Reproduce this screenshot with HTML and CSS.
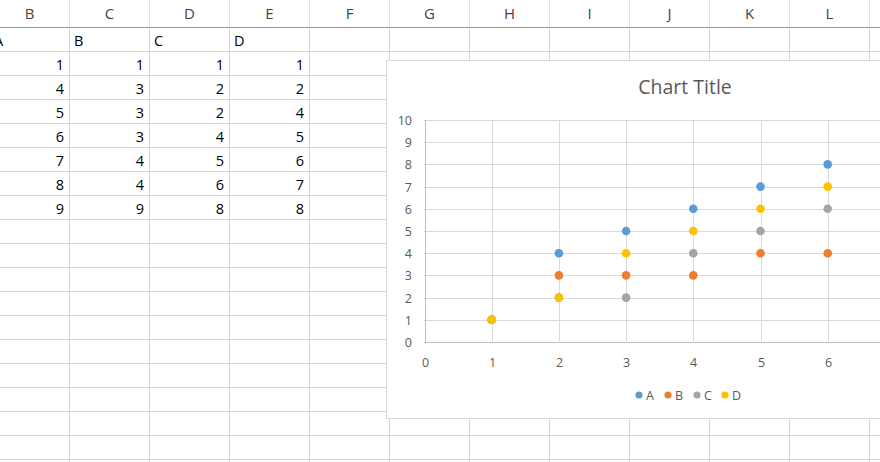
FILE: index.html
```html
<!DOCTYPE html>
<html lang="en">
<head>
<title>Scatter chart sheet</title>
<meta charset="utf-8">
<meta name="viewport" content="width=device-width, initial-scale=1">
<link rel="stylesheet" href="styles.css">
</head>
<body>

<div class="sheet" id="sheet"></div>

<div class="chart">
  <svg class="plot" id="plot" width="493" height="357" viewBox="387 61 493 357">
    <text class="chart-title" x="685" y="94">Chart Title</text>
    <g id="grid"></g>
    <g id="points"></g>
    <g class="legend">
      <circle cx="639" cy="395" r="3.6" fill="#5B9BD5"></circle>
      <text x="646" y="399.5">A</text>
      <circle cx="668" cy="395" r="3.6" fill="#ED7D31"></circle>
      <text x="675" y="399.5">B</text>
      <circle cx="697" cy="395" r="3.6" fill="#A5A5A5"></circle>
      <text x="704" y="399.5">C</text>
      <circle cx="725" cy="395" r="3.6" fill="#FFC000"></circle>
      <text x="732" y="399.5">D</text>
    </g>
  </svg>
</div>

<script>
    // visible columns B..L, plus the edge of M
    var letters = ["B", "C", "D", "E", "F", "G", "H", "I", "J", "K", "L", ""];
    var series = [
      { name: "A", color: "#5B9BD5", values: [1, 4, 5, 6, 7, 8, 9] },
      { name: "B", color: "#ED7D31", values: [1, 3, 3, 3, 4, 4, 9] },
      { name: "C", color: "#A5A5A5", values: [1, 2, 2, 4, 5, 6, 8] },
      { name: "D", color: "#FFC000", values: [1, 2, 4, 5, 6, 7, 8] }
    ];

    // build the spreadsheet grid
    var sheet = document.getElementById("sheet");
    var html = "";
    letters.forEach(function(l) {
      html += '<div class="cell head">' + l + '</div>';
    });
    for (var r = 0; r < 19; r++) {
      for (var c = 0; c < letters.length; c++) {
        var text = "";
        var cls = "cell";
        if (r === 0 && c < 4) {
          text = series[c].name;
          cls += " label";
        } else if (r > 0 && r < 8 && c < 4) {
          text = series[c].values[r - 1];
          cls += " num";
        }
        html += '<div class="' + cls + '">' + text + '</div>';
      }
    }
    sheet.innerHTML = html;

    // chart
    var ns = "http://www.w3.org/2000/svg";
    function px(x) { return 424.5 + x * 67.2; }
    function py(y) { return 342 - y * 22.2; }
    function el(name, attrs, parent, text) {
      var e = document.createElementNS(ns, name);
      for (var k in attrs) e.setAttribute(k, attrs[k]);
      if (text !== undefined) e.textContent = text;
      parent.appendChild(e);
      return e;
    }

    var grid = document.getElementById("grid");
    for (var y = 0; y <= 10; y++) {
      var gy = Math.round(py(y)) + 0.5;
      el("line", { x1: 424, x2: 920, y1: gy, y2: gy, "class": y === 0 ? "axis" : "gridline" }, grid);
      el("text", { x: 412, y: gy + 4.5, "class": "ylabel" }, grid, y);
    }
    for (var x = 0; x <= 6; x++) {
      var gx = Math.round(px(x)) + 0.5;
      el("line", { x1: gx, x2: gx, y1: 120, y2: 343, "class": x === 0 ? "axis" : "gridline" }, grid);
      el("text", { x: gx, y: 367, "class": "xlabel" }, grid, x);
    }

    var points = document.getElementById("points");
    series.forEach(function(s) {
      s.values.forEach(function(v, i) {
        el("circle", { cx: px(i + 1), cy: py(v), r: 4.3, fill: s.color }, points);
      });
    });
</script>

</body>
</html>
```

FILE: styles.css
```css
* {
  box-sizing: border-box;
}

body {
  margin: 0;
  position: relative;
  overflow: hidden;
  background-color: #ffffff;
  font-family: "Open Sans", "Noto Sans", Arial, sans-serif;
}

/* the spreadsheet */
.sheet {
  display: grid;
  grid-template-columns: repeat(12, 80px);
  grid-template-rows: 28px;
  grid-auto-rows: 24px;
  margin-left: -10px;
  width: 960px;
}

.cell {
  border-right: 1px solid #d4d4d4;
  border-bottom: 1px solid #d4d4d4;
  font-size: 14.5px;
  line-height: 23px;
  color: #000000;
  padding: 1px 5px 0 4px;
  white-space: nowrap;
  overflow: hidden;
}

.head {
  border-right-color: #e1e1e1;
  border-bottom-color: #9b9b9b;
  text-align: center;
  color: #444444;
  font-size: 15px;
  line-height: 27px;
  padding: 0;
}

.num {
  text-align: right;
}

/* the chart box */
.chart {
  position: absolute;
  left: 386px;
  top: 60px;
  width: 520px;
  height: 359px;
  background-color: #ffffff;
  border: 1px solid #d9d9d9;
}

.plot {
  display: block;
}

.chart-title {
  font-size: 19.5px;
  fill: #595959;
  text-anchor: middle;
}

.gridline {
  stroke: #d9d9d9;
  stroke-width: 1;
}

.axis {
  stroke: #bfbfbf;
  stroke-width: 1;
}

.ylabel {
  font-size: 12.5px;
  fill: #595959;
  text-anchor: end;
}

.xlabel {
  font-size: 12.5px;
  fill: #595959;
  text-anchor: middle;
}

.legend text {
  font-size: 12.5px;
  fill: #595959;
}
```
